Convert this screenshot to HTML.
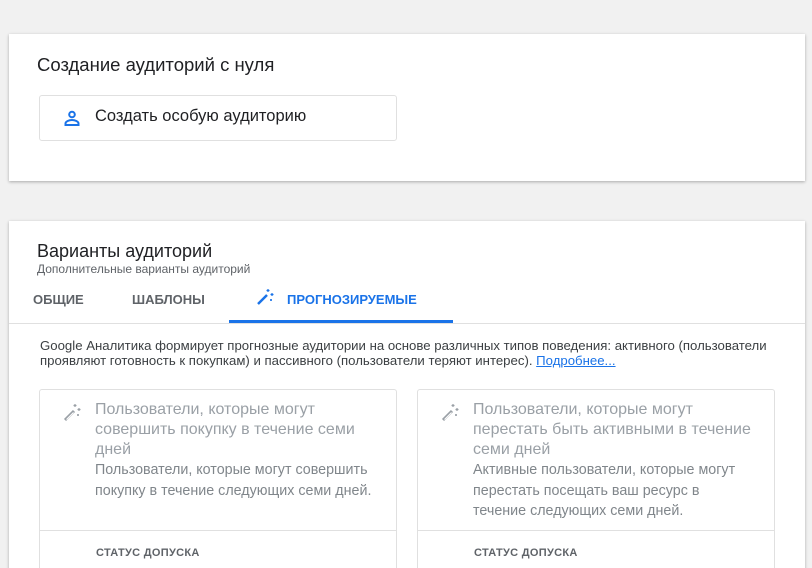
<!DOCTYPE html>
<html><head><meta charset="utf-8"><style>
html,body{margin:0;width:812px;height:568px;overflow:hidden}
body{background:#f1f1f1;font-family:"Liberation Sans",sans-serif;position:relative}
.card{position:absolute;left:9px;width:796px;background:#fff;box-shadow:0 1px 3px rgba(0,0,0,.3)}
.abs{position:absolute;white-space:nowrap}
.ic{position:absolute;left:39px;width:356px;height:200px;border:1px solid #e0e0e0;border-radius:3px;background:#fff}
.ic .t{position:absolute;left:55px;top:10px;font-size:16px;line-height:20px;color:#9aa0a6;white-space:normal;width:286px}
.ic .d{position:absolute;left:55px;top:70px;font-size:14.3px;line-height:20.5px;color:#80868b;width:280px}
.ic .hr{position:absolute;left:0;right:0;top:140px;border-top:1px solid #e0e0e0}
.ic .s{position:absolute;left:56px;top:157px;font-size:11px;font-weight:bold;color:#5f6368;letter-spacing:.3px}
.ic svg{position:absolute;left:22px;top:12px}
</style></head><body>
<div class="card" style="top:34px;height:147px">
<div class="abs" style="left:28px;top:20px;font-size:18.5px;color:#202124">Создание аудиторий с нуля</div>
<div style="position:absolute;left:30px;top:61px;width:356px;height:44px;border:1px solid #e0e0e0;border-radius:3px">
<svg style="position:absolute;left:23px;top:13px" width="18" height="18" viewBox="0 0 18 18"><circle cx="9" cy="5.5" r="2.8" fill="none" stroke="#1a73e8" stroke-width="2"/><path d="M2.5 16v-1.5c0-2 3.5-3.5 6.5-3.5s6.5 1.5 6.5 3.5V16z" fill="none" stroke="#1a73e8" stroke-width="2"/></svg>
<div class="abs" style="left:55px;top:11px;font-size:16.5px;color:#202124">Создать особую аудиторию</div>
</div></div>
<div class="card" style="top:221px;height:350px">
<div class="abs" style="left:28px;top:20px;font-size:18px;color:#202124">Варианты аудиторий</div>
<div class="abs" style="left:28px;top:41px;font-size:12px;color:#5f6368">Дополнительные варианты аудиторий</div>
<div class="abs" style="left:24px;top:71px;font-size:13px;font-weight:bold;color:#5f6368">ОБЩИЕ</div>
<div class="abs" style="left:123px;top:71px;font-size:13px;font-weight:bold;color:#5f6368">ШАБЛОНЫ</div>
<svg style="position:absolute;left:247px;top:67px" width="18" height="18" viewBox="0 0 18 18"><path d="M2 16L11 7" stroke="#1a73e8" stroke-width="2.5"/><path d="M12 1v3M10.5 2.5h3M16 5v3M14.5 6.5h3M15 11l0 2M14 12h2" stroke="#1a73e8" stroke-width="1.2"/></svg>
<div class="abs" style="left:278px;top:71px;font-size:13px;font-weight:bold;color:#1a73e8">ПРОГНОЗИРУЕМЫЕ</div>
<div style="position:absolute;left:220px;top:99px;width:224px;height:3px;background:#1a73e8"></div>
<div style="position:absolute;left:0;right:0;top:102px;border-top:1px solid #e0e0e0"></div>
<div class="abs" style="left:31px;top:117px;font-size:13.2px;line-height:15px;color:#3c4043">Google Аналитика формирует прогнозные аудитории на основе различных типов поведения: активного (пользователи<br>проявляют готовность к покупкам) и пассивного (пользователи теряют интерес). <span style="color:#1a73e8;text-decoration:underline">Подробнее...</span></div>
</div>
<div class="ic" style="top:389px">
<svg width="20" height="20" viewBox="0 0 20 20"><path d="M3 18L12 9" stroke="#9aa0a6" stroke-width="3"/><path d="M4.5 17.5L11.5 10.5" stroke="#fff" stroke-width="1"/><path d="M13 2v3M11.5 3.5h3M17 6v3M15.5 7.5h3M16 12v2M15 13h2" stroke="#9aa0a6" stroke-width="1.2"/></svg>
<div class="t">Пользователи, которые могут совершить покупку в течение семи дней</div>
<div class="d">Пользователи, которые могут совершить покупку в течение следующих семи дней.</div>
<div class="hr"></div><div class="s">СТАТУС ДОПУСКА</div></div>
<div class="ic" style="top:389px;left:417px">
<svg width="20" height="20" viewBox="0 0 20 20"><path d="M3 18L12 9" stroke="#9aa0a6" stroke-width="3"/><path d="M4.5 17.5L11.5 10.5" stroke="#fff" stroke-width="1"/><path d="M13 2v3M11.5 3.5h3M17 6v3M15.5 7.5h3M16 12v2M15 13h2" stroke="#9aa0a6" stroke-width="1.2"/></svg>
<div class="t">Пользователи, которые могут перестать быть активными в течение семи дней</div>
<div class="d">Активные пользователи, которые могут перестать посещать ваш ресурс в течение следующих семи дней.</div>
<div class="hr"></div><div class="s">СТАТУС ДОПУСКА</div></div>
</body></html>
